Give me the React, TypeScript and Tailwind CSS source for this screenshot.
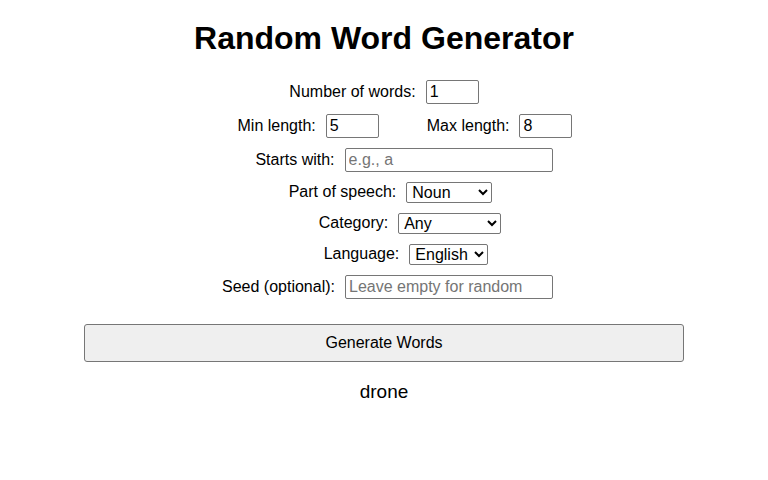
import React from 'react';

const inputCls =
  'h-[24px] border border-[#767676] rounded-[2px] px-[3px] text-[16px] text-black bg-white placeholder:text-[#757575] outline-none';
const selectCls =
  'h-[21px] border border-[#767676] rounded-[2px] text-[16px] text-black bg-white pl-[1px]';

function Row({ children, className = '' }: { children: React.ReactNode; className?: string }) {
  return <div className={`flex items-center justify-center mb-[10px] ${className}`}>{children}</div>;
}

export default function App() {
  return (
    <div className="min-h-screen bg-white text-black font-['Liberation_Sans',Arial,sans-serif] leading-[1.15] pt-[20px]">
      <div className="w-[600px] mx-auto text-center">
        <h1 className="text-[32px] font-bold leading-[37px] mb-[23px]">Random Word Generator</h1>

        <Row>
          <label className="mr-[10px]">Number of words:</label>
          <input type="number" defaultValue={1} className={`${inputCls} w-[53px]`} />
        </Row>

        <Row className="pl-[42px]">
          <label className="mr-[10px]">Min length:</label>
          <input type="number" defaultValue={5} className={`${inputCls} w-[53px]`} />
          <label className="ml-[48px] mr-[10px]">Max length:</label>
          <input type="number" defaultValue={8} className={`${inputCls} w-[53px]`} />
        </Row>

        <Row className="pl-[40px]">
          <label className="mr-[10px]">Starts with:</label>
          <input type="text" placeholder="e.g., a" className={`${inputCls} w-[208px]`} />
        </Row>

        <Row className="pl-[13px]">
          <label className="mr-[10px]">Part of speech:</label>
          <select defaultValue="noun" className={`${selectCls} w-[86px]`}>
            <option value="noun">Noun</option>
            <option value="verb">Verb</option>
            <option value="adjective">Adjective</option>
          </select>
        </Row>

        <Row className="pl-[52px]">
          <label className="mr-[10px]">Category:</label>
          <select defaultValue="any" className={`${selectCls} w-[103px]`}>
            <option value="any">Any</option>
            <option value="animals">Animals</option>
            <option value="technology">Technology</option>
          </select>
        </Row>

        <Row className="pl-[44px]">
          <label className="mr-[10px]">Language:</label>
          <select defaultValue="en" className={`${selectCls} w-[79px]`}>
            <option value="en">English</option>
            <option value="es">Spanish</option>
          </select>
        </Row>

        <Row className="pl-[7px]">
          <label className="mr-[10px]">Seed (optional):</label>
          <input type="text" placeholder="Leave empty for random" className={`${inputCls} w-[208px]`} />
        </Row>

        <button className="w-full h-[38px] mt-[15px] bg-[#efefef] border border-[#767676] rounded-[3px] text-[16px]">
          Generate Words
        </button>

        <div className="mt-[19px] text-[19px]">drone</div>
      </div>
    </div>
  );
}
